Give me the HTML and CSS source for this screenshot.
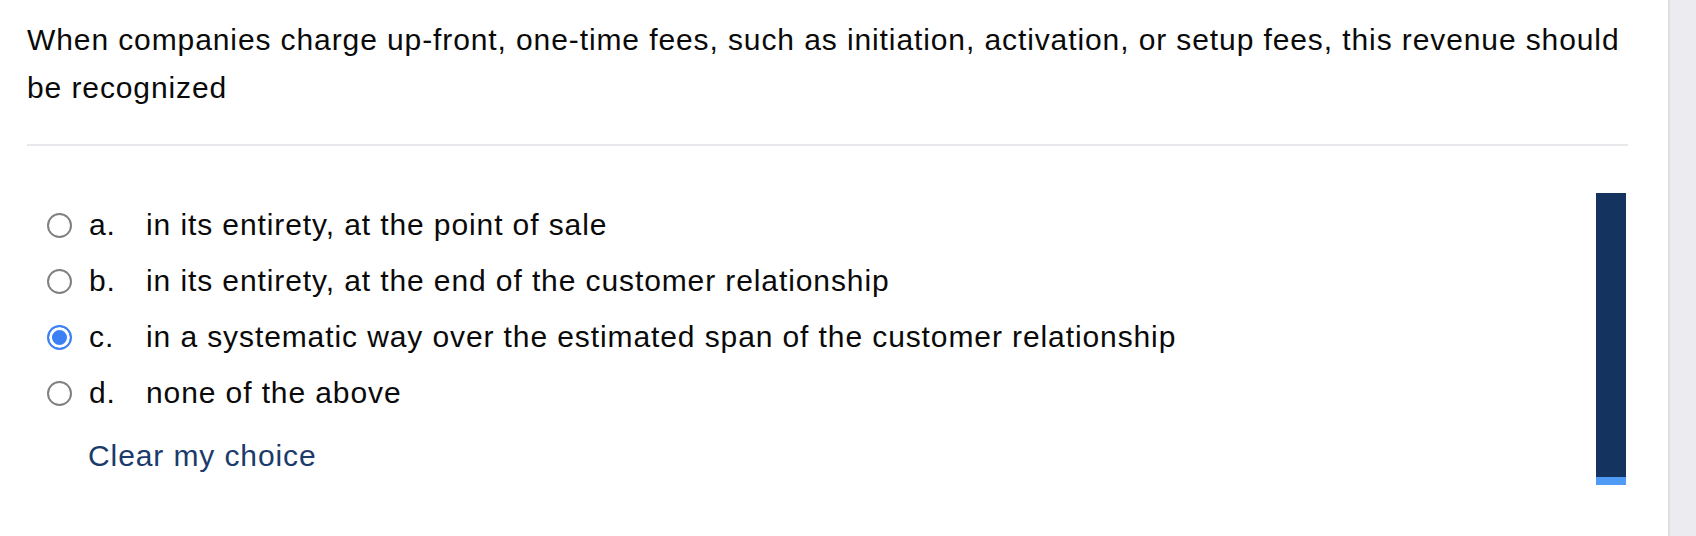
FILE: index.html
```html
<!DOCTYPE html>
<html lang="en">
<head>
    <meta charset="UTF-8">
    <meta name="viewport" content="width=device-width, initial-scale=1.0">
    <title>Question</title>
    <link rel="stylesheet" href="styles.css">
</head>
<body>
    <div class="page">
        <div class="main">
            <div class="qtext">When companies charge up-front, one-time fees, such as initiation, activation, or setup fees, this revenue should be recognized</div>
            <div class="rule"></div>
            <div class="answer-row">
                <div class="answers">
                    <label class="opt">
                        <input type="radio" name="q1" class="radio">
                        <span class="letter">a.</span>
                        <span class="opt-text">in its entirety, at the point of sale</span>
                    </label>
                    <label class="opt">
                        <input type="radio" name="q1" class="radio">
                        <span class="letter">b.</span>
                        <span class="opt-text">in its entirety, at the end of the customer relationship</span>
                    </label>
                    <label class="opt">
                        <input type="radio" name="q1" class="radio" checked>
                        <span class="letter">c.</span>
                        <span class="opt-text">in a systematic way over the estimated span of the customer relationship</span>
                    </label>
                    <label class="opt">
                        <input type="radio" name="q1" class="radio">
                        <span class="letter">d.</span>
                        <span class="opt-text">none of the above</span>
                    </label>
                    <a class="clear" href="#">Clear my choice</a>
                </div>
                <div class="flagbar">
                    <div class="flagbar-fill"></div>
                </div>
            </div>
        </div>
        <div class="side"></div>
    </div>
</body>
</html>
```
FILE: styles.css
```css
body {
    margin: 0;
    background: #fff;
    font-family: "Liberation Sans", Arial, sans-serif;
    color: #0a0a0a;
    letter-spacing: 0.9px;
}
.page {
    display: flex;
    height: 536px;
}
.main {
    flex: 1;
    padding: 16px 40px 0 27px;
}
.side {
    width: 26px;
    background-color: #ebebf0;
    border-left: 2px solid #dedee4;
}
.qtext {
    font-size: 30px;
    line-height: 48px;
}
.rule {
    height: 2px;
    background-color: #e8e8ec;
    margin-top: 32px;
}
.answer-row {
    display: flex;
    justify-content: space-between;
    margin-top: 47px;
}
.answers {
    display: flex;
    flex-direction: column;
    padding-top: 4px;
}
.opt {
    display: flex;
    align-items: center;
    height: 56px;
    font-size: 30px;
}
.radio {
    appearance: none;
    -webkit-appearance: none;
    margin: 0 17px 0 20px;
    width: 25px;
    height: 25px;
    border: 2px solid #808080;
    border-radius: 50%;
    background: #fff;
}
.radio:checked {
    border-color: #3b80f5;
    background: #3b80f5;
    box-shadow: inset 0 0 0 3px #fff;
}
.letter {
    width: 57px;
}
.clear {
    margin: 7px 0 0 61px;
    font-size: 30px;
    line-height: 56px;
    color: #1a3b6b;
    text-decoration: none;
}
.flagbar {
    display: flex;
    flex-direction: column;
    width: 30px;
    height: 292px;
    margin-right: 2px;
    background-color: #4f9bf6;
}
.flagbar-fill {
    height: 284px;
    background-color: #14345f;
}
```
